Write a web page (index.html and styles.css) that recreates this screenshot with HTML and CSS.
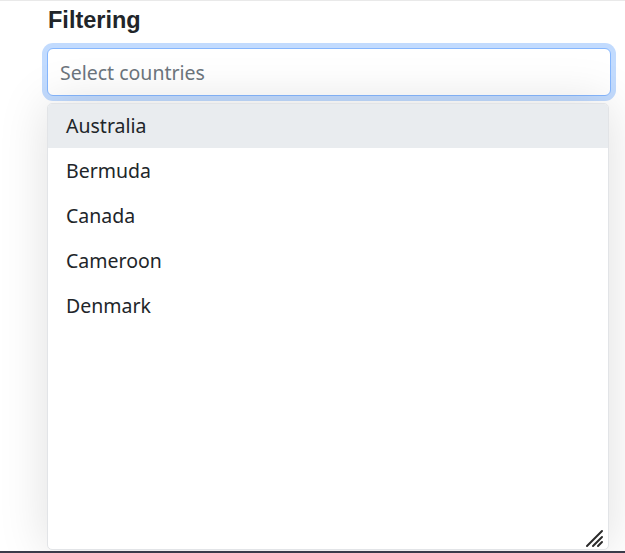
FILE: index.html
```html
<!DOCTYPE html>
<html>
<head>
<meta charset="utf-8">
<link rel="stylesheet" href="styles.css">
</head>
<body>
<div class="page">
  <div class="field">
    <h2 class="title">Filtering</h2>
    <div class="combo">
      <input class="input" type="text" placeholder="Select countries">
      <div class="menu">
        <div class="option active">Australia</div>
        <div class="option">Bermuda</div>
        <div class="option">Canada</div>
        <div class="option">Cameroon</div>
        <div class="option">Denmark</div>
        <svg class="grip" width="20" height="20" viewBox="0 0 20 20">
          <path d="M2 18 L17 3 M8 18 L17 9 M13 18 L17 14" stroke="#2b2b2b" stroke-width="2" stroke-linecap="round" fill="none"/>
        </svg>
      </div>
    </div>
  </div>
</div>
</body>
</html>
```
FILE: styles.css
```css
html, body {
  margin: 0;
  padding: 0;
  background: #fff;
}
.page {
  box-sizing: border-box;
  height: 553px;
  border-top: 1px solid #e9e9e9;
  border-bottom: 2px solid #3b3b4a;
  overflow: hidden;
  position: relative;
}
.field {
  padding: 6px 14px 0 47px;
}
.title {
  margin: 0 0 0 1px;
  font-family: "Liberation Sans", Arial, sans-serif;
  font-weight: bold;
  font-size: 23.5px;
  line-height: 26px;
  color: #212529;
}
.combo {
  position: relative;
  margin-top: 15px;
}
.input {
  display: block;
  box-sizing: border-box;
  width: 564px;
  height: 48px;
  margin: 0;
  padding: 0 12px;
  border: 1px solid #86b7fe;
  border-radius: 6px;
  box-shadow: 0 0 0 5px rgba(13, 110, 253, 0.25);
  outline: none;
  font-family: "Noto Sans", "Open Sans", sans-serif;
  font-size: 19.5px;
  color: #212529;
  background: #fff;
}
.input::placeholder {
  color: #6c757d;
}
.menu {
  position: absolute;
  left: 0;
  top: 55px;
  box-sizing: border-box;
  width: 562px;
  height: 447px;
  background: #fff;
  border: 1px solid #e2e4e7;
  border-radius: 5px;
  box-shadow: 0 0 50px rgba(0, 0, 0, 0.13);
  overflow: hidden;
  font-family: "Noto Sans", "Open Sans", sans-serif;
  font-size: 19.5px;
  color: #212529;
}
.option {
  height: 45px;
  line-height: 45px;
  padding-left: 18px;
}
.option.active {
  background: #e9ecef;
  height: 44px;
  line-height: 44px;
}
.grip {
  position: absolute;
  right: 3px;
  bottom: 1px;
}
```
